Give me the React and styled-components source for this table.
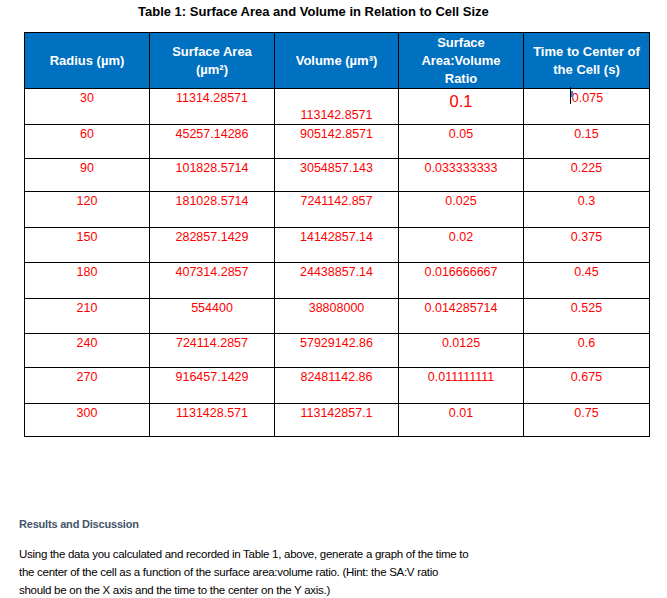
import React from 'react';
import styled, { createGlobalStyle } from 'styled-components';

const Global = createGlobalStyle`
  html, body { margin: 0; padding: 0; background: #ffffff; }
  body { font-family: "Liberation Sans", Arial, sans-serif; color: #000; }
`;

const Page = styled.div`
  width: 667px;
  height: 598px;
  padding-left: 19px;
  box-sizing: border-box;
  overflow: hidden;
`;

const Title = styled.h1`
  margin: 0 0 11px 0;
  padding: 3px 0 0 119px;
  font-family: "Liberation Sans", Arial, sans-serif;
  font-size: 13px;
  font-weight: 700;
  line-height: 18px;
  color: #000;
`;

const Table = styled.table`
  margin-left: 5px;
  width: 625px;
  table-layout: fixed;
  border-collapse: collapse;
  font-family: "Liberation Sans", Arial, sans-serif;
`;

const HeadCell = styled.th`
  height: 55px;
  background: #0070c0;
  color: #ffffff;
  border: 1px solid #000;
  font-size: 13px;
  font-weight: 700;
  line-height: 18px;
  text-align: center;
  vertical-align: middle;
  padding: 0 4px;
`;

const Row = styled.tr`
  height: ${p => p.$h}px;
`;

const Cell = styled.td`
  border: 1px solid #000;
  color: #ff0000;
  font-size: ${p => (p.$big ? '16.5px' : '12.5px')};
  line-height: ${p => (p.$big ? '20px' : '15px')};
  text-align: center;
  vertical-align: ${p => (p.$bottom ? 'bottom' : 'top')};
  padding: ${p => (p.$bottom ? '0 4px 1px' : '2px 4px 0')};
  white-space: nowrap;
`;

const Caret = styled.span`
  position: relative;
  display: inline-block;
  width: 1px;
  height: 17px;
  margin: -4px 1px 0 0;
  vertical-align: top;
  background: #000;
  &::after {
    content: '';
    position: absolute;
    left: 1px;
    top: 4px;
    width: 2px;
    height: 6px;
    background: #3b7fd8;
  }
`;

const Heading = styled.h2`
  margin: 78px 0 12px 0;
  font-family: "Liberation Sans", Arial, sans-serif;
  font-size: 11px;
  font-weight: 700;
  letter-spacing: -0.2px;
  line-height: 18px;
  color: #44546a;
`;

const Paragraph = styled.p`
  margin: 0;
  font-family: "Liberation Sans", Arial, sans-serif;
  font-size: 11.5px;
  letter-spacing: -0.28px;
  line-height: 18px;
  color: #000;
`;

const rows = [
  ['30', '11314.28571', '113142.8571', '0.1', '0.075', 36],
  ['60', '45257.14286', '905142.8571', '0.05', '0.15', 34],
  ['90', '101828.5714', '3054857.143', '0.033333333', '0.225', 33],
  ['120', '181028.5714', '7241142.857', '0.025', '0.3', 36],
  ['150', '282857.1429', '14142857.14', '0.02', '0.375', 35],
  ['180', '407314.2857', '24438857.14', '0.016666667', '0.45', 36],
  ['210', '554400', '38808000', '0.014285714', '0.525', 35],
  ['240', '724114.2857', '57929142.86', '0.0125', '0.6', 34],
  ['270', '916457.1429', '82481142.86', '0.011111111', '0.675', 36],
  ['300', '1131428.571', '113142857.1', '0.01', '0.75', 33],
];

export default function App() {
  return (
    <Page>
      <Global />
      <Title>Table 1: Surface Area and Volume in Relation to Cell Size</Title>
      <Table>
        <colgroup>
          <col style={{ width: 125 }} />
          <col style={{ width: 125 }} />
          <col style={{ width: 124 }} />
          <col style={{ width: 125 }} />
          <col style={{ width: 126 }} />
        </colgroup>
        <thead>
          <tr>
            <HeadCell>Radius (µm)</HeadCell>
            <HeadCell>Surface Area<br />(µm²)</HeadCell>
            <HeadCell>Volume (µm³)</HeadCell>
            <HeadCell>Surface<br />Area:Volume<br />Ratio</HeadCell>
            <HeadCell>Time to Center of<br />the Cell (s)</HeadCell>
          </tr>
        </thead>
        <tbody>
          {rows.map(([r, sa, v, ratio, t, h], i) => (
            <Row key={r} $h={h}>
              <Cell>{r}</Cell>
              <Cell>{sa}</Cell>
              <Cell $bottom={i === 0}>{v}</Cell>
              <Cell $big={i === 0}>{ratio}</Cell>
              <Cell>
                {i === 0 && <Caret />}
                {t}
              </Cell>
            </Row>
          ))}
        </tbody>
      </Table>
      <Heading>Results and Discussion</Heading>
      <Paragraph>
        Using the data you calculated and recorded in Table 1, above, generate a graph of the time to
        <br />
        the center of the cell as a function of the surface area:volume ratio. (Hint: the SA:V ratio
        <br />
        should be on the X axis and the time to the center on the Y axis.)
      </Paragraph>
    </Page>
  );
}
